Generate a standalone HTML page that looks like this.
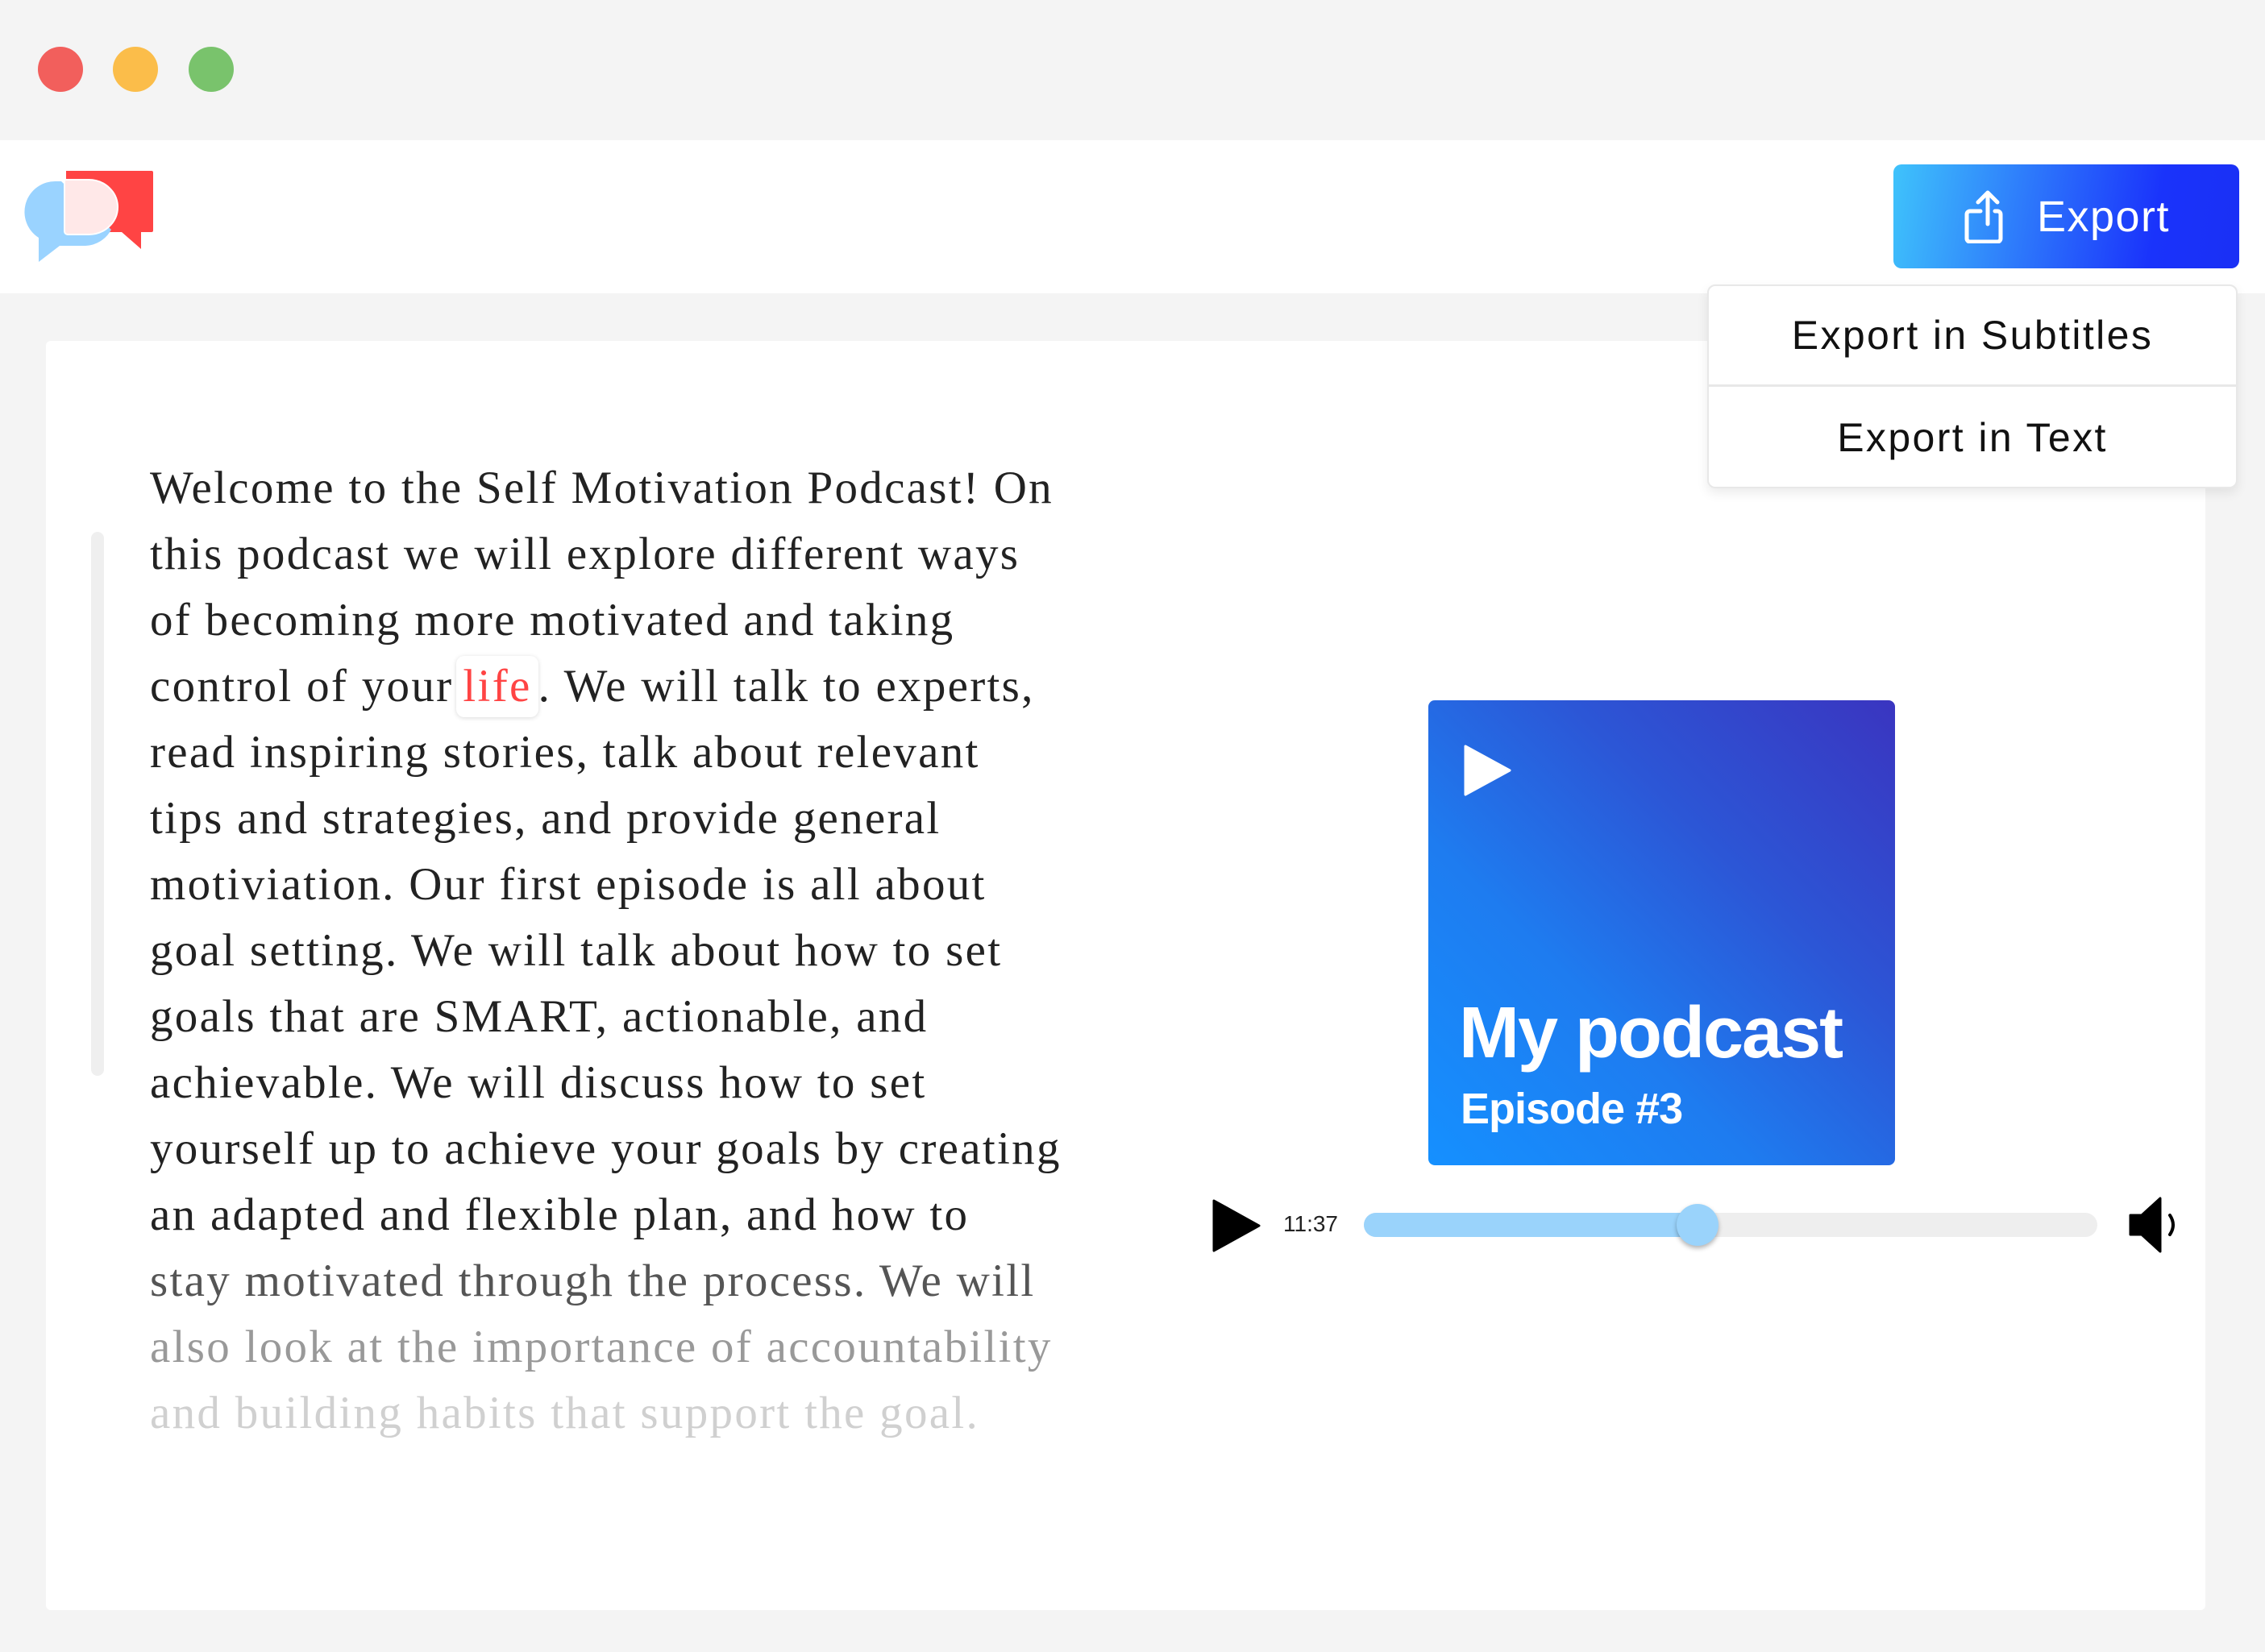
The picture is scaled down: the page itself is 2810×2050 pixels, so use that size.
<!DOCTYPE html>
<html><head><meta charset="utf-8"><style>
*{margin:0;padding:0;box-sizing:border-box}
body{width:2810px;height:2050px;background:#f4f4f4;position:relative;overflow:hidden;font-family:"Liberation Sans",sans-serif}
.abs{position:absolute}
.dot{position:absolute;width:56px;height:56px;border-radius:50%;top:58px}
.header{left:0;top:174px;width:2810px;height:190px;background:#fff}
.card{left:57px;top:423px;width:2679px;height:1575px;background:#fff;border-radius:6px}
.btn{left:2349px;top:204px;width:429px;height:129px;border-radius:10px;background:linear-gradient(100deg,#3fc3fb 0%,#2a6cfb 45%,#1a33fb 75%,#1a30f5 100%);color:#fff;font-size:54px;letter-spacing:1.5px;display:flex;align-items:center;justify-content:center;gap:30px}
.dd{left:2118px;top:353px;width:658px;height:253px;background:#fff;border:2px solid #e8e8e8;border-radius:10px;box-shadow:0 6px 14px rgba(0,0,0,.08)}
.dd div{height:125px;display:flex;align-items:center;justify-content:center;font-size:50px;letter-spacing:2.4px;color:#111}
.txt{left:186px;top:565px;font-family:"Liberation Serif",serif;font-size:57px;line-height:82px;color:#222;white-space:nowrap;letter-spacing:2.3px}
.life{display:inline-block;color:#f44;background:#fff;border-radius:10px;box-shadow:0 1px 6px rgba(0,0,0,.15);padding:0 8px;line-height:76px;margin-left:4px}
.pc{left:1772px;top:869px;width:579px;height:577px;border-radius:8px;background:linear-gradient(45deg,#1590ff 0%,#1e7cf0 35%,#2c56d6 65%,#3a35c0 100%)}
</style></head><body>
<div class="dot" style="left:47px;background:#f25f5c"></div>
<div class="dot" style="left:140px;background:#fbbd4a"></div>
<div class="dot" style="left:234px;background:#79c36c"></div>
<div class="abs header"></div>
<svg class="abs" style="left:0;top:150px" width="300" height="220" viewBox="0 150 300 220">
<path d="M82 212h106a2 2 0 0 1 2 2v72a2 2 0 0 1-2 2h-13v21l-24-21H82z" fill="#ff4444"/>
<path d="M76 225h-6a38 38 0 0 0-22 70v30l26-20h32a38 38 0 0 0 32-20z" fill="#9ad3ff"/>
<path d="M80 223h30a36 34 0 0 1 0 68H84a4 4 0 0 1-4-4z" fill="#ffe8e8" stroke="#fff" stroke-width="2"/>
</svg>
<div class="abs btn"><svg width="62" height="66" viewBox="0 0 62 66" fill="none" stroke="#fff" stroke-width="5" stroke-linecap="round" stroke-linejoin="round"><path d="M31 4v38M19 15L31 3l12 12"/><path d="M22 26H9a4 4 0 0 0-4 4v30a4 4 0 0 0 4 4h34a4 4 0 0 0 4-4V30a4 4 0 0 0-4-4H40"/></svg><span>Export</span></div>
<div class="abs card"></div>
<div class="abs dd"><div style="border-bottom:3px solid #e8e8e8">Export in Subtitles</div><div>Export in Text</div></div>
<div class="abs" style="left:113px;top:660px;width:16px;height:675px;background:#efefef;border-radius:8px"></div>
<div class="abs txt">
Welcome to the Self Motivation Podcast! On<br>
this podcast we will explore different ways<br>
of becoming more motivated and taking<br>
control of your<span class="life">life</span>. We will talk to experts,<br>
read inspiring stories, talk about relevant<br>
tips and strategies, and provide general<br>
motiviation. Our first episode is all about<br>
goal setting. We will talk about how to set<br>
goals that are SMART, actionable, and<br>
achievable. We will discuss how to set<br>
yourself up to achieve your goals by creating<br>
an adapted and flexible plan, and how to<br>
<span style="color:#555">stay motivated through the process. We will</span><br>
<span style="color:#999">also look at the importance of accountability</span><br>
<span style="color:#d0d0d0">and building habits that support the goal.</span>
</div>
<div class="abs pc"></div>
<svg class="abs" style="left:1815px;top:923px" width="62" height="66"><path d="M3 3L58 33L3 63z" fill="#fff" stroke="#fff" stroke-width="3" stroke-linejoin="round"/></svg>
<div class="abs" style="left:1810px;top:1232px;font-size:90px;font-weight:bold;color:#fff;letter-spacing:-2px;line-height:100px">My podcast</div>
<div class="abs" style="left:1812px;top:1346px;font-size:54px;font-weight:bold;color:#fff;letter-spacing:-1px;line-height:60px">Episode #3</div>
<svg class="abs" style="left:1503px;top:1487px" width="62" height="68"><path d="M3 3L59 34L3 65z" fill="#000" stroke="#000" stroke-width="3" stroke-linejoin="round"/></svg>
<div class="abs" style="left:1592px;top:1503px;font-size:28px;color:#222;letter-spacing:0px">11:37</div>
<div class="abs" style="left:1692px;top:1505px;width:910px;height:30px;border-radius:15px;background:#eee"></div>
<div class="abs" style="left:1692px;top:1505px;width:420px;height:30px;border-radius:15px;background:#9ad3fb"></div>
<div class="abs" style="left:2080px;top:1494px;width:52px;height:52px;border-radius:50%;background:#9ad3fb;box-shadow:0 3px 6px rgba(0,0,0,.3)"></div>
<svg class="abs" style="left:2640px;top:1484px" width="70" height="72"><path d="M3 24h14L40 3v66L17 48H3z" fill="#000" stroke="#000" stroke-width="3" stroke-linejoin="round"/><path d="M52 24q8 12 0 24" fill="none" stroke="#000" stroke-width="4" stroke-linecap="round"/></svg>
</body></html>
